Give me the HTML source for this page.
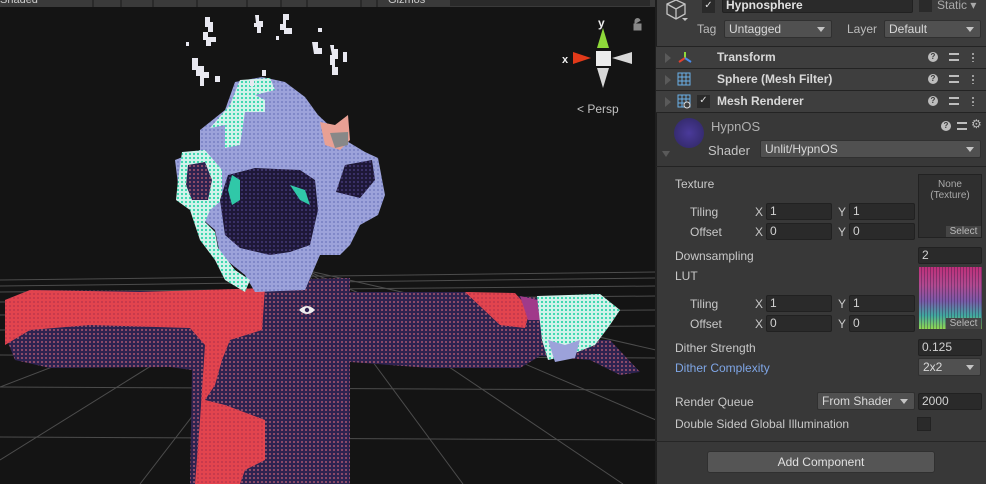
<!DOCTYPE html>
<html><head><meta charset="utf-8"><style>
*{margin:0;padding:0;box-sizing:border-box}
body{width:986px;height:484px;overflow:hidden;background:#383838;font-family:"Liberation Sans",sans-serif;font-size:12px;color:#c8c8c8;position:relative}
.a{position:absolute}
.f{position:absolute;background:#2a2a2a;border:1px solid #212121;border-radius:2px;height:17px;padding-left:3px;line-height:15px;color:#d2d2d2}
.dd{position:absolute;background:#505050;border:1px solid #303030;border-radius:2px;height:18px;padding-left:4px;line-height:16px;color:#d8d8d8}
.dd:after{content:"";position:absolute;right:6px;top:6px;border-left:4px solid transparent;border-right:4px solid transparent;border-top:5px solid #c4c4c4}
.hr{position:absolute;left:656px;width:330px;height:1px;background:#232323}
.ch{position:absolute;left:656px;width:330px;height:21px;background:#3e3e3e;font-weight:bold;color:#d8d8d8;line-height:21px}
.tri{position:absolute;left:9px;top:6px;border-top:5px solid transparent;border-bottom:5px solid transparent;border-left:6px solid #5a5a5a}
.q{position:absolute;width:10px;height:10px;border-radius:50%;background:#bdbdbd;color:#3a3a3a;font-size:8px;line-height:10px;text-align:center;font-weight:bold}
.s{position:absolute;width:10px;height:8px;border-top:2px solid #bdbdbd;border-bottom:2px solid #bdbdbd}
.d{position:absolute;width:2px;height:10px;background:radial-gradient(circle,#bdbdbd 1px,transparent 1px) 0 0/2px 4px}
</style></head><body>
<svg class="a" style="left:0;top:0" width="656" height="484" viewBox="0 0 656 484">
<defs>
<pattern id="dp" width="4" height="4" patternUnits="userSpaceOnUse"><rect width="4" height="4" fill="#2e2350"/><rect x="1" y="1" width="2" height="2" fill="#8a4a68"/></pattern>
<pattern id="rp" width="4" height="4" patternUnits="userSpaceOnUse"><rect width="4" height="4" fill="#e2444e"/><rect x="1" y="1" width="2" height="2" fill="#c83a4c"/></pattern>
<pattern id="lp" width="4" height="4" patternUnits="userSpaceOnUse"><rect width="4" height="4" fill="#9ca2da"/><rect x="1" y="1" width="2" height="2" fill="#8088c8"/></pattern>
<pattern id="mp" width="4" height="4" patternUnits="userSpaceOnUse"><rect width="4" height="4" fill="#d0f2ea"/><rect x="1" y="1" width="2" height="2" fill="#40d8b0"/></pattern>
<pattern id="fp" width="4" height="4" patternUnits="userSpaceOnUse"><rect width="4" height="4" fill="#1e1838"/><rect x="1" y="1" width="2" height="2" fill="#3a3066"/></pattern>
</defs>
<rect width="656" height="484" fill="#141414"/>
<rect width="656" height="7" fill="#3a3a3a"/>
<g fill="#2a2a2a"><rect x="92" y="0" width="2" height="7"/><rect x="120" y="0" width="2" height="7"/><rect x="152" y="0" width="2" height="7"/><rect x="196" y="0" width="2" height="7"/><rect x="246" y="0" width="2" height="7"/><rect x="280" y="0" width="2" height="7"/><rect x="306" y="0" width="2" height="7"/><rect x="360" y="0" width="2" height="7"/><rect x="376" y="0" width="2" height="7"/><rect x="450" y="0" width="200" height="6"/></g>
<text x="0" y="3" fill="#ccc" font-size="11">Shaded</text>
<text x="388" y="3" fill="#ccc" font-size="11">Gizmos</text>
<g stroke="#4c4c4c" stroke-width="1" fill="none">
<line x1="0" y1="280" x2="656" y2="272"/><line x1="0" y1="286" x2="656" y2="278"/><line x1="0" y1="292" x2="656" y2="286"/><line x1="0" y1="302" x2="656" y2="296"/><line x1="0" y1="315" x2="656" y2="310"/><line x1="0" y1="330" x2="656" y2="326"/><line x1="0" y1="355" x2="656" y2="358"/><line x1="0" y1="387" x2="656" y2="390"/><line x1="0" y1="437" x2="656" y2="440"/>
<line x1="305" y1="270" x2="0" y2="387"/><line x1="305" y1="270" x2="0" y2="460"/><line x1="305" y1="270" x2="140" y2="484"/><line x1="305" y1="270" x2="215" y2="484"/><line x1="305" y1="270" x2="463" y2="484"/><line x1="305" y1="270" x2="623" y2="484"/><line x1="305" y1="270" x2="656" y2="420"/><line x1="305" y1="270" x2="656" y2="350"/><line x1="305" y1="270" x2="305" y2="484"/>
</g>
<path d="M5 300 L30 290 L250 292 L260 280 L350 278 L350 292 L470 292 L540 298 L545 340 L610 340 L640 372 L620 375 L590 360 L540 356 L520 368 L430 368 L350 362 L350 484 L190 484 L192 370 L170 367 L50 368 L15 360 L5 335Z" fill="url(#dp)"/>
<path d="M5 300 L30 290 L140 292 L265 288 L262 330 L230 340 L222 360 L215 385 L205 400 L225 405 L265 420 L265 460 L245 470 L240 484 L195 484 L200 420 L205 345 L190 328 L90 325 L30 330 L5 345Z" fill="url(#rp)"/>
<path d="M465 292 L515 293 L530 310 L525 328 L500 325 Z" fill="url(#rp)"/>
<path d="M520 296 L538 300 L542 320 L528 320Z" fill="#a03a8a"/>
<path d="M537 296 L600 294 L620 310 L610 325 L595 345 L570 355 L548 360 L542 340 Z" fill="url(#mp)"/>
<path d="M548 340 L565 345 L580 340 L575 358 L555 362Z" fill="#9ca2da"/>
<path d="M235 82 L262 77 L285 82 L305 97 L318 115 L345 140 L365 152 L378 158 L385 195 L378 215 L360 225 L350 245 L340 255 L320 255 L305 290 L255 292 L245 275 L220 255 L215 230 L180 200 L175 160 L200 150 L200 130 L225 110 Z" fill="url(#lp)"/>
<path d="M240 80 L270 78 L275 90 L255 95 L265 100 L265 112 L245 112 L240 145 L225 148 L225 125 L210 128 L230 105Z" fill="url(#mp)"/>
<path d="M182 152 L205 150 L222 170 L222 200 L210 210 L205 222 L215 232 L218 248 L235 270 L250 280 L245 292 L225 280 L215 260 L200 240 L190 210 L176 200 L178 180Z" fill="url(#mp)"/>
<path d="M188 165 L205 162 L212 180 L208 200 L192 200 L186 185Z" fill="url(#dp)"/>
<path d="M228 175 L255 168 L300 170 L315 180 L318 210 L310 245 L290 252 L270 255 L240 248 L225 235 L220 200Z" fill="url(#fp)"/>
<path d="M232 175 L240 180 L240 200 L232 205 L228 190Z" fill="#30c8a8"/>
<path d="M290 185 L305 190 L310 205 L300 200Z" fill="#30c8a8"/>
<path d="M345 165 L372 160 L375 180 L360 198 L336 192Z" fill="url(#fp)"/>
<path d="M320 122 L335 125 L348 115 L350 140 L340 150 L325 145Z" fill="#e8a094"/>
<path d="M330 133 L348 132 L348 145 L335 148Z" fill="#888"/>
<g fill="#e8e8f0">
<path d="M205 17 h5 v5 h3 v10 h-5 v5 h8 v5 h-5 v4 h-5 v-6 h-3 v-8 h5 v-5 h-3z M186 42 h3 v4 h-3z M192 58 h6 v8 h6 v6 h5 v6 h-5 v8 h-4 v-10 h-4 v-6 h-4z M215 76 h5 v6 h-5z"/>
<path d="M255 15 h4 v6 h4 v6 h-2 v6 h-4 v-6 h-3 v-4 h2z M283 14 h6 v6 h-3 v8 h6 v6 h-8 v-4 h-4 v-6 h3z M276 36 h3 v4 h-3z"/>
<path d="M318 28 h4 v4 h-4z M312 42 h6 v6 h4 v6 h-8z M330 45 h4 v4 h4 v10 h-3 v8 h3 v8 h-6 v-10 h-2 v-10 h2z M343 52 h4 v10 h-4z M250 80 h4 v6 h-4z M262 70 h4 v6 h-4z"/>
</g>
<path d="M299 310 Q307 302 315 310 Q307 318 299 310Z" fill="#eee"/><circle cx="307" cy="310" r="2.2" fill="#2e2350"/>
<path d="M603 28 L597 48 L609 48Z" fill="#8ed83a"/>
<path d="M591 58 L573 52 L573 64Z" fill="#e23a1a"/>
<path d="M612 58 L632 52 L632 64Z" fill="#d8d8d8"/>
<path d="M603 88 L597 68 L609 68Z" fill="#d8d8d8"/>
<rect x="596" y="51" width="15" height="15" fill="#ececec"/>
<text x="598" y="27" fill="#eee" font-size="12" font-weight="bold">y</text>
<text x="562" y="63" fill="#eee" font-size="11" font-weight="bold">x</text>
<path d="M634 24 h7 v6 h-7z M635 24 v-3 a2.5 2.5 0 0 1 5 0" fill="#888" stroke="#888" stroke-width="1"/>
<text x="577" y="113" fill="#c0c0c0" font-size="12">&lt; Persp</text>
</svg>
<div class="a" style="left:655px;top:0;width:2px;height:484px;background:#1e1e1e"></div>
<div class="a" style="left:657px;top:0;width:329px;height:46px;background:#3c3c3c"></div>
<svg class="a" style="left:664px;top:0" width="28" height="24"><path d="M3 4 L12 0 L21 4 L21 14 L12 19 L3 14Z M3 4 L12 9 L21 4 M12 9 L12 19" fill="none" stroke="#c4c4c4" stroke-width="1.3"/><path d="M18 18 l6 0 l-3 3z" fill="#c4c4c4"/></svg>
<div class="a" style="left:702px;top:0;width:13px;height:13px;background:#2a2a2a;color:#ddd;font-size:10px;line-height:12px;text-align:center">✓</div>
<div class="f" style="left:722px;top:-4px;width:191px;height:17px;font-weight:bold;color:#e0e0e0;line-height:17px">Hypnosphere</div>
<div class="a" style="left:919px;top:-2px;width:13px;height:14px;background:#2a2a2a"></div>
<div class="a" style="left:937px;top:-2px;color:#aaa">Static ▾</div>
<div class="a" style="left:697px;top:22px;color:#bbb">Tag</div>
<div class="dd" style="left:724px;top:20px;width:108px">Untagged</div>
<div class="a" style="left:847px;top:22px;color:#bbb">Layer</div>
<div class="dd" style="left:884px;top:20px;width:97px">Default</div>
<div class="hr" style="top:46px"></div>
<div class="ch" style="top:47px"><div class="tri"></div><svg class="a" style="left:22px;top:4px" width="14" height="13"><path d="M7 1 v6" stroke="#8ed83a" stroke-width="2"/><path d="M7 7 L1 11" stroke="#e04030" stroke-width="2"/><path d="M7 7 L13 11" stroke="#4a8ae8" stroke-width="2"/></svg><span class="a" style="left:61px">Transform</span><div class="q" style="left:272px;top:5px">?</div><div class="s" style="left:293px;top:6px"></div><div class="d" style="left:316px;top:5px"></div></div>
<div class="hr" style="top:68px"></div>
<div class="ch" style="top:69px"><div class="tri"></div><svg class="a" style="left:21px;top:3px" width="14" height="14"><path d="M1 1h12v12H1z M5 1v12 M9 1v12 M1 5h12 M1 9h12" fill="none" stroke="#6ab0e8" stroke-width="1"/></svg><span class="a" style="left:61px">Sphere (Mesh Filter)</span><div class="q" style="left:272px;top:5px">?</div><div class="s" style="left:293px;top:6px"></div><div class="d" style="left:316px;top:5px"></div></div>
<div class="hr" style="top:90px"></div>
<div class="ch" style="top:91px"><div class="tri"></div><svg class="a" style="left:21px;top:3px" width="14" height="15"><path d="M1 1h12v12H1z M5 1v12 M9 1v12 M1 5h12 M1 9h12" fill="none" stroke="#6ab0e8" stroke-width="1"/><circle cx="10" cy="11" r="3" fill="#3e3e3e" stroke="#ddd"/></svg><div class="a" style="left:41px;top:4px;width:13px;height:13px;background:#2a2a2a;color:#ddd;font-size:10px;line-height:12px;text-align:center;font-weight:normal">✓</div><span class="a" style="left:61px">Mesh Renderer</span><div class="q" style="left:272px;top:5px">?</div><div class="s" style="left:293px;top:6px"></div><div class="d" style="left:316px;top:5px"></div></div>
<div class="hr" style="top:112px"></div>
<div class="a" style="left:674px;top:118px;width:30px;height:30px;border-radius:50%;background:radial-gradient(circle,#4a3a9a,#2e2660)"></div>
<div class="a" style="left:711px;top:119px;color:#b0b0b0;font-size:13px">HypnOS</div>
<div class="q" style="left:941px;top:121px">?</div><div class="s" style="left:957px;top:122px"></div><div class="a" style="left:971px;top:117px;color:#bdbdbd;font-size:12px">⚙</div>
<div class="a" style="left:708px;top:143px;color:#c4c4c4;font-size:13px">Shader</div>
<div class="dd" style="left:760px;top:140px;width:221px">Unlit/HypnOS</div>
<div class="a" style="left:662px;top:151px;border-left:4px solid transparent;border-right:4px solid transparent;border-top:6px solid #5a5a5a"></div>
<div class="hr" style="top:166px"></div>
<div class="a" style="left:675px;top:177px">Texture</div>
<div class="a" style="left:918px;top:174px;width:64px;height:64px;background:#2f2f2f;border:1px solid #222;text-align:center;font-size:10px;color:#aaa;line-height:11px;padding-top:4px">None<br>(Texture)</div>
<div class="a" style="left:946px;top:226px;width:35px;height:11px;background:#454545;font-size:10px;color:#bbb;line-height:11px;text-align:center">Select</div>
<div class="a" style="left:690px;top:205px">Tiling</div>
<div class="a" style="left:755px;top:205px">X</div><div class="f" style="left:766px;top:203px;width:66px">1</div>
<div class="a" style="left:838px;top:205px">Y</div><div class="f" style="left:849px;top:203px;width:66px">1</div>
<div class="a" style="left:690px;top:225px">Offset</div>
<div class="a" style="left:755px;top:225px">X</div><div class="f" style="left:766px;top:223px;width:66px">0</div>
<div class="a" style="left:838px;top:225px">Y</div><div class="f" style="left:849px;top:223px;width:66px">0</div>
<div class="a" style="left:675px;top:249px">Downsampling</div>
<div class="f" style="left:918px;top:247px;width:64px">2</div>
<div class="a" style="left:675px;top:269px">LUT</div>
<div class="a" style="left:919px;top:267px;width:63px;height:62px;background:repeating-linear-gradient(90deg,rgba(0,0,0,0) 0 2px,rgba(40,20,60,.35) 2px 3px),linear-gradient(180deg,#c0307a 0%,#b04a90 30%,#7a5aa8 55%,#40a8a0 78%,#90d850 100%)"></div>
<div class="a" style="left:946px;top:318px;width:35px;height:11px;background:#454545;font-size:10px;color:#bbb;line-height:11px;text-align:center">Select</div>
<div class="a" style="left:690px;top:297px">Tiling</div>
<div class="a" style="left:755px;top:297px">X</div><div class="f" style="left:766px;top:295px;width:66px">1</div>
<div class="a" style="left:838px;top:297px">Y</div><div class="f" style="left:849px;top:295px;width:66px">1</div>
<div class="a" style="left:690px;top:317px">Offset</div>
<div class="a" style="left:755px;top:317px">X</div><div class="f" style="left:766px;top:315px;width:66px">0</div>
<div class="a" style="left:838px;top:317px">Y</div><div class="f" style="left:849px;top:315px;width:66px">0</div>
<div class="a" style="left:675px;top:341px">Dither Strength</div>
<div class="f" style="left:918px;top:339px;width:64px">0.125</div>
<div class="a" style="left:675px;top:361px;color:#7fa6e6">Dither Complexity</div>
<div class="dd" style="left:918px;top:358px;width:63px">2x2</div>
<div class="a" style="left:675px;top:395px">Render Queue</div>
<div class="dd" style="left:817px;top:392px;width:98px">From Shader</div>
<div class="f" style="left:918px;top:393px;width:64px">2000</div>
<div class="a" style="left:675px;top:417px">Double Sided Global Illumination</div>
<div class="a" style="left:917px;top:417px;width:14px;height:14px;background:#2a2a2a;border:1px solid #222"></div>
<div class="hr" style="top:441px;background:#262626"></div>
<div class="a" style="left:707px;top:451px;width:228px;height:22px;background:#555;border:1px solid #303030;border-radius:3px;text-align:center;line-height:20px;color:#e0e0e0">Add Component</div>
</body></html>
